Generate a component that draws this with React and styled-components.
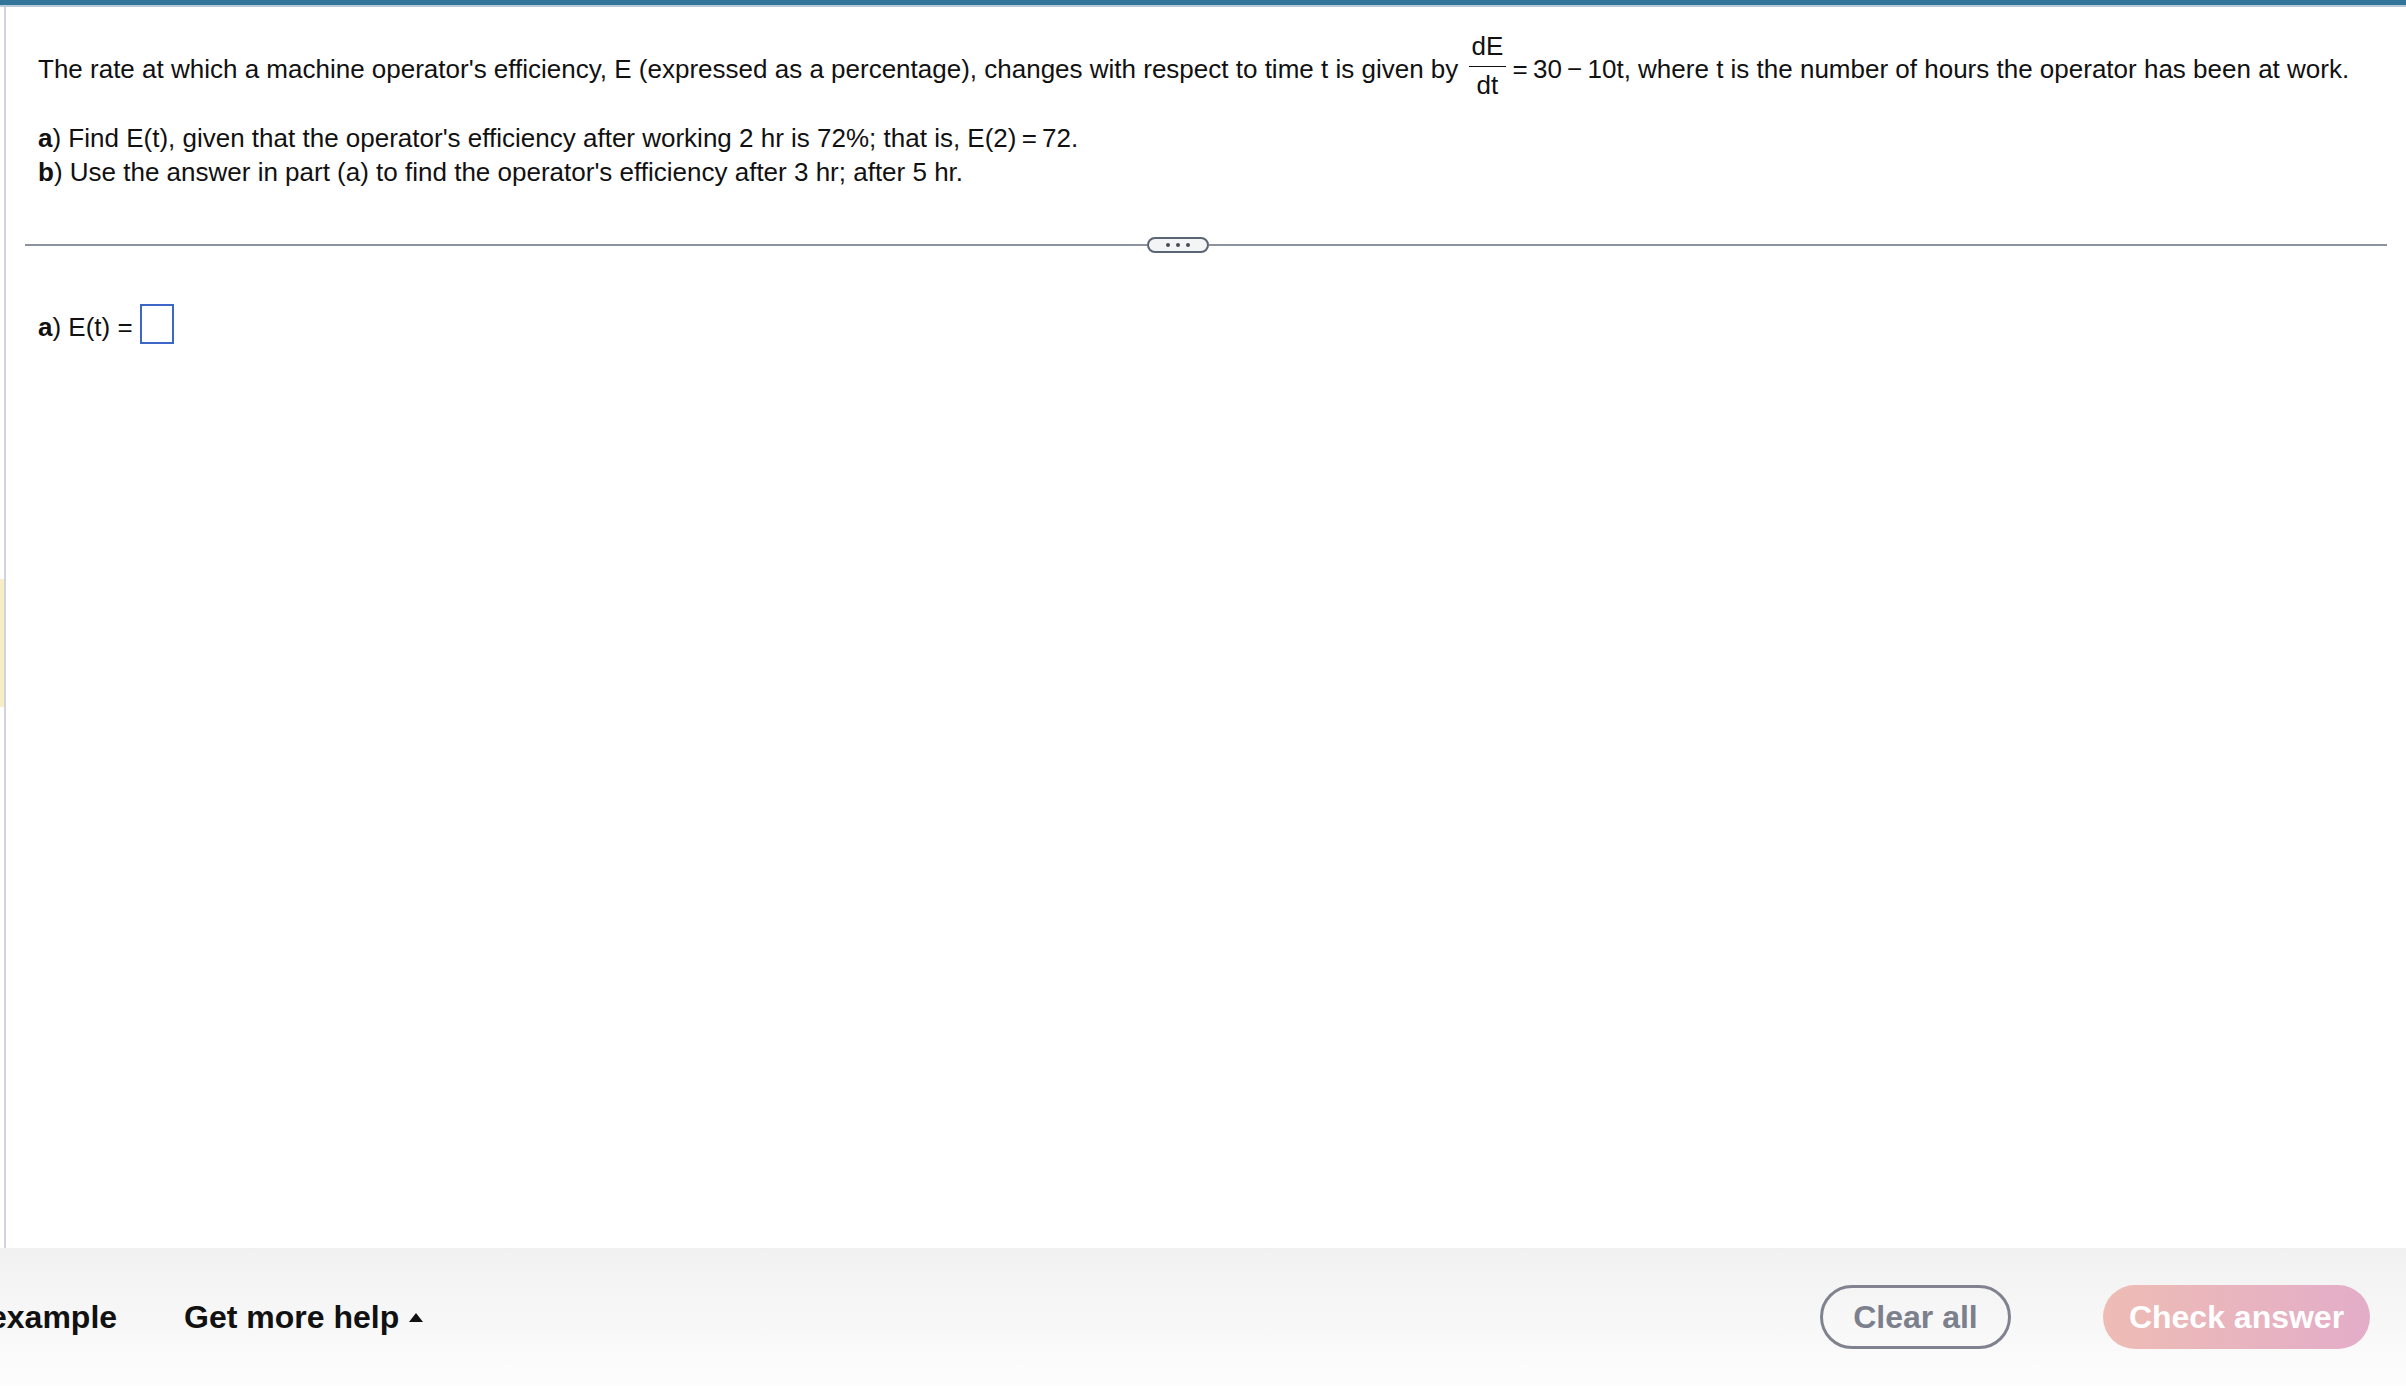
import styled, { createGlobalStyle } from "styled-components";

const GlobalStyle = createGlobalStyle`
  html, body {
    margin: 0;
    padding: 0;
    background: #fff;
  }
  body {
    font-family: "Liberation Sans", Arial, Helvetica, sans-serif;
    color: #111;
  }
`;

const Page = styled.div`
  height: 1386px;
  display: flex;
  flex-direction: column;
  overflow: hidden;
`;

const TopStripe = styled.div`
  height: 5px;
  background: #33759a;
  border-bottom: 2px solid #b9cad9;
  flex: none;
`;

const Main = styled.div`
  flex: 1;
  display: flex;
  min-height: 0;
`;

const Gutter = styled.div`
  width: 4px;
  flex: none;
  display: flex;
  flex-direction: column;
`;

const Marker = styled.div`
  margin-top: 572px;
  height: 128px;
  background: #f9edc5;
`;

const Content = styled.div`
  flex: 1;
  border-left: 2px solid #cfd3e0;
  padding: 25px 19px 0 19px;
  font-size: 26px;
`;

const Question = styled.div`
  padding-left: 13px;
`;

const FirstLine = styled.div`
  line-height: 34px;
  white-space: nowrap;
`;

const Frac = styled.span`
  display: inline-flex;
  flex-direction: column;
  align-items: center;
  vertical-align: 23px;
  margin: 0 1px 0 3px;
`;

const Num = styled.span`
  line-height: 28px;
  padding: 0 3px 6px;
  border-bottom: 1.5px solid #111;
`;

const Den = styled.span`
  line-height: 28px;
  padding-top: 4px;
`;

const Parts = styled.div`
  margin-top: 22px;
  line-height: 34px;
`;

const Label = styled.b`
  font-weight: bold;
`;

const Divider = styled.div`
  margin-top: 48px;
  display: flex;
  align-items: center;
  height: 16px;
`;

const Rule = styled.div`
  height: 2px;
  background: #8c939f;
  width: ${(p) => (p.$w ? p.$w + "px" : "auto")};
  flex: ${(p) => (p.$w ? "none" : "1")};
`;

const MorePill = styled.div`
  width: 62px;
  height: 16px;
  box-sizing: border-box;
  border: 2px solid #5b6472;
  border-radius: 8px;
  background: #f3f4f6;
  display: flex;
  align-items: center;
  justify-content: center;
  gap: 6px;
  flex: none;
`;

const Dot = styled.span`
  width: 4px;
  height: 4px;
  border-radius: 50%;
  background: #474d57;
`;

const Answer = styled.div`
  margin-top: 51px;
  padding-left: 13px;
  line-height: 34px;
`;

const InputBox = styled.span`
  display: inline-block;
  width: 34px;
  height: 40px;
  box-sizing: border-box;
  border: 2px solid #3c66c8;
  vertical-align: -8px;
`;

const Footer = styled.div`
  height: 138px;
  flex: none;
  box-sizing: border-box;
  padding: 37px 36px 0 0;
  background: linear-gradient(#f1f1f1, #fdfdfd);
  display: flex;
  align-items: flex-start;
`;

const FooterRow = styled.div`
  flex: 1;
  height: 64px;
  display: flex;
  align-items: center;
  font-size: 32px;
  font-weight: bold;
`;

const FooterLink = styled.span`
  color: #111;
  white-space: nowrap;
  display: inline-flex;
  align-items: center;
  gap: 10px;
  margin-left: ${(p) => p.$ml || 0}px;
`;

const Spacer = styled.div`
  flex: 1;
`;

const PillButton = styled.button`
  height: 64px;
  width: ${(p) => p.$w}px;
  box-sizing: border-box;
  border-radius: 32px;
  font-family: "Liberation Sans", Arial, Helvetica, sans-serif;
  font-size: 32px;
  font-weight: bold;
  padding: 0;
  cursor: pointer;
  flex: none;
`;

const ClearButton = styled(PillButton)`
  background: transparent;
  border: 3px solid #80838f;
  color: #7c808d;
`;

const CheckButton = styled(PillButton)`
  margin-left: 92px;
  border: none;
  color: #fff;
  background: linear-gradient(90deg, #eebcb4, #e3adc9);
`;

function UpCaret() {
  return (
    <svg width="14" height="9" viewBox="0 0 14 9">
      <polygon points="7,0 14,9 0,9" fill="#111" />
    </svg>
  );
}

export default function App() {
  return (
    <Page>
      <GlobalStyle />
      <TopStripe />
      <Main>
        <Gutter>
          <Marker />
        </Gutter>
        <Content>
          <Question>
            <FirstLine>
              The rate at which a machine operator's efficiency, E (expressed as a percentage), changes with
              respect to time t is given by{" "}
              <Frac>
                <Num>dE</Num>
                <Den>dt</Den>
              </Frac>
              {"\u2009"}={"\u2009"}30{"\u2009"}−{"\u2009"}10t, where t is the number of hours the operator has
              been at work.
            </FirstLine>
            <Parts>
              <div>
                <Label>a</Label>) Find E(t), given that the operator's efficiency after working 2 hr is 72%;
                that is, E(2)&#8201;=&#8201;72.
              </div>
              <div>
                <Label>b</Label>) Use the answer in part (a) to find the operator's efficiency after 3 hr;
                after 5 hr.
              </div>
            </Parts>
          </Question>
          <Divider>
            <Rule $w={1122} />
            <MorePill>
              <Dot />
              <Dot />
              <Dot />
            </MorePill>
            <Rule />
          </Divider>
          <Answer>
            <Label>a</Label>) E(t) ={" "}
            <InputBox />
          </Answer>
        </Content>
      </Main>
      <Footer>
        <FooterRow>
          <FooterLink $ml={-11}>example</FooterLink>
          <FooterLink $ml={67}>
            Get more help <UpCaret />
          </FooterLink>
          <Spacer />
          <ClearButton $w={191}>Clear all</ClearButton>
          <CheckButton $w={267}>Check answer</CheckButton>
        </FooterRow>
      </Footer>
    </Page>
  );
}
